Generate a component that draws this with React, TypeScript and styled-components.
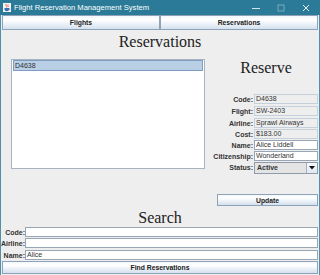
import React from 'react';
import styled, { createGlobalStyle } from 'styled-components';

const Global = createGlobalStyle`
  html, body { margin: 0; padding: 0; background: #eeeeee; }
  body { font-family: "Liberation Sans", Arial, sans-serif; }
  * { box-sizing: border-box; }
`;

const Window = styled.div`
  width: 320px;
  height: 275px;
  overflow: hidden;
  display: flex;
  flex-direction: column;
  background: #eeeeee;
`;

const TitleBar = styled.div`
  height: 15px;
  flex: none;
  background: #2b7b98;
  display: flex;
  align-items: center;
  padding-left: 3px;
  padding-right: 2px;
`;

const TitleText = styled.span`
  color: #ffffff;
  font-family: "Liberation Sans", Arial, sans-serif;
  font-size: 7.6px;
  margin-left: 3px;
  white-space: nowrap;
`;

const Controls = styled.div`
  margin-left: auto;
  display: flex;
`;

const Ctl = styled.div<{ $dim?: boolean }>`
  width: 25px;
  height: 15px;
  display: flex;
  align-items: center;
  justify-content: center;
  opacity: ${(p) => (p.$dim ? 0.45 : 1)};
`;

const Frame = styled.div`
  flex: 1;
  display: flex;
  flex-direction: column;
  border-left: 1px solid #4b93ad;
  border-right: 1px solid #4b93ad;
`;

const Tabs = styled.div`
  height: 15px;
  flex: none;
  display: grid;
  grid-template-columns: 158px 1fr;
  padding: 0 1px;
`;

const GradButton = styled.div`
  border: 1px solid #8ea3b8;
  background: linear-gradient(to bottom, #f3f7fb 0%, #ffffff 30%, #d3e1ee 100%);
  display: flex;
  align-items: center;
  justify-content: center;
  font-family: "Liberation Sans", Arial, sans-serif;
  font-weight: bold;
  font-size: 6.8px;
  color: #222;
`;

const Heading = styled.div<{ $h: number; $pt: number }>`
  height: ${(p) => p.$h}px;
  flex: none;
  padding-top: ${(p) => p.$pt}px;
  font-family: "Liberation Serif", "Times New Roman", serif;
  font-size: 16px;
  line-height: 18px;
  color: #222;
  text-align: center;
`;

const Main = styled.div`
  height: 147px;
  flex: none;
  display: flex;
`;

const LeftCol = styled.div`
  width: 204px;
  flex: none;
  padding-left: 10px;
`;

const List = styled.div`
  width: 194px;
  height: 110px;
  background: #ffffff;
  border: 1px solid #a9b3bf;
  padding: 0 1px;
`;

const ListRow = styled.div<{ $sel?: boolean }>`
  height: 11px;
  background: ${(p) => (p.$sel ? '#b8cfe5' : 'transparent')};
  border: 1px solid ${(p) => (p.$sel ? '#7f9dc3' : 'transparent')};
  font-size: 7px;
  line-height: 9px;
  color: #333;
  padding-left: 1px;
`;

const RightCol = styled.div`
  flex: 1;
  display: flex;
  flex-direction: column;
  padding-left: 9px;
  padding-right: 1px;
`;

const Form = styled.div`
  display: grid;
  grid-template-columns: 39px 1fr;
  column-gap: 1px;
  grid-template-rows: 12px 12px 11px 11px 11px 11px 12px;
`;

const Label = styled.div`
  height: 10px;
  display: flex;
  align-items: center;
  justify-content: flex-end;
  white-space: nowrap;
  font-size: 7px;
  font-weight: bold;
  color: #333;
`;

const Field = styled.div<{ $editable?: boolean }>`
  height: 10px;
  border: 1px solid ${(p) => (p.$editable ? '#98a6b4' : '#c4d0dc')};
  background: ${(p) => (p.$editable ? '#ffffff' : '#eeeeee')};
  font-size: 7px;
  line-height: 8px;
  color: #333;
  padding-left: 1px;
  white-space: nowrap;
  overflow: hidden;
`;

const Combo = styled.div`
  height: 12px;
  display: flex;
  border: 1px solid #8f9ba8;
  background: #e4e4e4;
`;

const ComboText = styled.div`
  flex: 1;
  font-size: 7px;
  font-weight: bold;
  line-height: 10px;
  color: #333;
  padding-left: 2px;
`;

const ComboArrow = styled.div`
  width: 11px;
  border-left: 1px solid #a5b0bc;
  background: linear-gradient(to bottom, #f6f9fc, #dfe8f1);
  display: flex;
  align-items: center;
  justify-content: center;
`;

const UpdateButton = styled(GradButton)`
  height: 13px;
  margin-top: 20px;
  margin-left: 3px;
`;

const SearchGrid = styled.div`
  display: grid;
  grid-template-columns: 24px 1fr;
  grid-template-rows: 11px 12px 11px;
  padding-right: 1px;
`;

const FindButton = styled(GradButton)`
  height: 13px;
  margin: 0 1px;
`;

const JavaIcon = () => (
  <svg width="8" height="9" viewBox="0 0 8 9">
    <rect x="0" y="0" width="8" height="9" fill="#f4f4f4" />
    <path d="M3 1 C2 2.5 4.5 3 3.5 4.5 M5 1.5 C4.3 2.5 5.8 3 5 4" stroke="#e2422b" strokeWidth="0.8" fill="none" />
    <path d="M1.5 5 H6 V6.5 C6 7.6 5 8.2 3.8 8.2 C2.5 8.2 1.5 7.6 1.5 6.5 Z" fill="#3b6fb0" />
    <path d="M6 5.4 C7.3 5.4 7.3 6.8 6 6.9" stroke="#3b6fb0" strokeWidth="0.6" fill="none" />
  </svg>
);

const App: React.FC = () => (
  <>
    <Global />
    <Window>
      <TitleBar>
        <JavaIcon />
        <TitleText>Flight Reservation Management System</TitleText>
        <Controls>
          <Ctl>
            <svg width="8" height="8" viewBox="0 0 8 8">
              <path d="M0 4.5 H8" stroke="#ffffff" strokeWidth="0.8" />
            </svg>
          </Ctl>
          <Ctl $dim>
            <svg width="8" height="8" viewBox="0 0 8 8">
              <rect x="1" y="1" width="6" height="6" stroke="#ffffff" strokeWidth="0.8" fill="none" />
            </svg>
          </Ctl>
          <Ctl>
            <svg width="8" height="8" viewBox="0 0 8 8">
              <path d="M1 1 L7 7 M7 1 L1 7" stroke="#ffffff" strokeWidth="0.9" />
            </svg>
          </Ctl>
        </Controls>
      </TitleBar>
      <Frame>
        <Tabs>
          <GradButton>Flights</GradButton>
          <GradButton>Reservations</GradButton>
        </Tabs>
        <Heading $h={29} $pt={3}>Reservations</Heading>
        <Main>
          <LeftCol>
            <List>
              <ListRow $sel>D4638</ListRow>
            </List>
          </LeftCol>
          <RightCol>
            <Heading $h={35} $pt={0}>Reserve</Heading>
            <Form>
              <Label>Code:</Label>
              <Field>D4638</Field>
              <Label>Flight:</Label>
              <Field>SW-2403</Field>
              <Label>Airline:</Label>
              <Field>Sprawl Airways</Field>
              <Label>Cost:</Label>
              <Field>$183.00</Field>
              <Label>Name:</Label>
              <Field $editable>Alice Liddell</Field>
              <Label>Citizenship:</Label>
              <Field $editable>Wonderland</Field>
              <Label>Status:</Label>
              <Combo>
                <ComboText>Active</ComboText>
                <ComboArrow>
                  <svg width="6" height="4" viewBox="0 0 6 4">
                    <path d="M0 0 H6 L3 3.5 Z" fill="#111" />
                  </svg>
                </ComboArrow>
              </Combo>
            </Form>
            <UpdateButton>Update</UpdateButton>
          </RightCol>
        </Main>
        <Heading $h={21} $pt={3}>Search</Heading>
        <SearchGrid>
          <Label>Code:</Label>
          <Field $editable />
          <Label>Airline:</Label>
          <Field $editable />
          <Label>Name:</Label>
          <Field $editable>Alice</Field>
        </SearchGrid>
        <FindButton>Find Reservations</FindButton>
      </Frame>
    </Window>
  </>
);

export default App;
